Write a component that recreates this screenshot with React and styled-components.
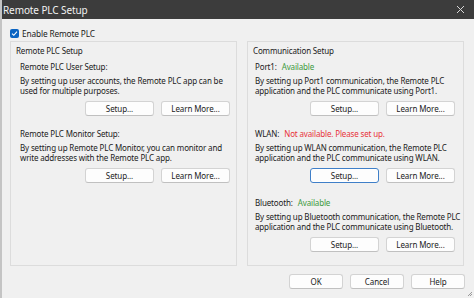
import React from 'react'
import styled, { createGlobalStyle } from 'styled-components'

const GlobalStyle = createGlobalStyle`
  html, body {
    margin: 0;
    padding: 0;
    background: #f0f0f0;
  }
  body {
    font-family: "Segoe UI", "Noto Sans", "Open Sans", sans-serif;
  }
`

const Window = styled.div`
  position: relative;
  width: 474px;
  height: 298px;
  display: flex;
  flex-direction: column;
  background: #f0f0f0;
  color: #1b1b1b;
  font-size: 8px;
  letter-spacing: -0.15px;
  white-space: nowrap;
  box-sizing: border-box;
  border-left: 2px solid #c4c4c4;
  overflow: hidden;
`

const TitleBar = styled.div`
  height: 19px;
  flex: none;
  display: flex;
  align-items: center;
  justify-content: space-between;
  background: #3c3c3c;
  color: #f2f2f2;
  font-size: 10px;
  letter-spacing: -0.1px;
  padding: 0 9px 0 3px;
  margin-left: -2px;
`

const Body = styled.div`
  flex: 1;
  display: flex;
  flex-direction: column;
  padding: 9px 9px 0 8px;
`

const CheckRow = styled.label`
  display: flex;
  align-items: center;
  height: 10px;
  gap: 3px;
  font-size: 8.3px;
`

const CheckBox = styled.span`
  width: 9px;
  height: 9px;
  border-radius: 2px;
  background: #0a64c2;
  display: flex;
  align-items: center;
  justify-content: center;
`

const Groups = styled.div`
  display: grid;
  grid-template-columns: 227px 217px;
  column-gap: 10px;
  margin-top: 3px;
  height: 225px;
`

const GroupBox = styled.div`
  border: 1px solid #dcdcdc;
  display: flex;
  flex-direction: column;
  padding: 4px 0 0 0;
`

const GroupLabel = styled.div`
  line-height: 10px;
  padding-left: 5px;
`

const Section = styled.div`
  display: flex;
  flex-direction: column;
  padding: 0 ${p => p.$right}px 0 ${p => p.$left}px;
  margin-top: ${p => p.$top}px;
`

const Heading = styled.div`
  line-height: 10px;
  display: flex;
`

const Status = styled.span`
  margin-left: 5px;
  color: ${p => (p.$ok ? '#3c9a3c' : '#e8323a')};
`

const Desc = styled.div`
  margin-top: 4px;
  line-height: 10px;
`

const ButtonRow = styled.div`
  display: flex;
  justify-content: flex-end;
  gap: 7px;
  margin-top: 5px;
`

const Button = styled.button`
  width: ${p => p.$w}px;
  height: 15px;
  box-sizing: border-box;
  padding: 0;
  font: inherit;
  font-size: 8px;
  letter-spacing: -0.1px;
  color: #1b1b1b;
  background: #fdfdfd;
  border: 1px solid ${p => (p.$focus ? '#3f7fc8' : '#d3d3d3')};
  border-bottom-color: ${p => (p.$focus ? '#3f7fc8' : '#c0c0c0')};
  border-radius: 3px;
  box-shadow: ${p => (p.$focus ? 'inset 0 0 0 1px #ffffff' : 'none')};
`

const Footer = styled.div`
  display: flex;
  justify-content: flex-end;
  gap: 7px;
  margin-top: 8px;
`

const Grip = styled.svg`
  position: absolute;
  right: 1px;
  bottom: 1px;
`

function Buttons({ focus }) {
  return (
    <ButtonRow>
      <Button $w={69} $focus={focus}>Setup...</Button>
      <Button $w={69}>Learn More...</Button>
    </ButtonRow>
  )
}

export default function App() {
  return (
    <Window>
      <GlobalStyle />
      <TitleBar>
        <span>Remote PLC Setup</span>
        <svg width="9" height="9" viewBox="0 0 9 9">
          <path d="M1 1 L8 8 M8 1 L1 8" stroke="#d8d8d8" strokeWidth="1" />
        </svg>
      </TitleBar>
      <Body>
        <CheckRow>
          <CheckBox>
            <svg width="7" height="7" viewBox="0 0 7 7">
              <path d="M1 3.6 L2.8 5.3 L6 1.6" stroke="#fff" strokeWidth="1.1" fill="none" />
            </svg>
          </CheckBox>
          Enable Remote PLC
        </CheckRow>
        <Groups>
          <GroupBox>
            <GroupLabel>Remote PLC Setup</GroupLabel>
            <Section $left={9} $right={6} $top={6}>
              <Heading>Remote PLC User Setup:</Heading>
              <Desc>
                By setting up user accounts, the Remote PLC app can be
                <br />
                used for multiple purposes.
              </Desc>
              <Buttons />
            </Section>
            <Section $left={9} $right={6} $top={13}>
              <Heading>Remote PLC Monitor Setup:</Heading>
              <Desc>
                By setting up Remote PLC Monitor, you can monitor and
                <br />
                write addresses with the Remote PLC app.
              </Desc>
              <Buttons />
            </Section>
          </GroupBox>
          <GroupBox>
            <GroupLabel>Communication Setup</GroupLabel>
            <Section $left={7} $right={8} $top={6}>
              <Heading>
                Port1:<Status $ok>Available</Status>
              </Heading>
              <Desc>
                By setting up Port1 communication, the Remote PLC
                <br />
                application and the PLC communicate using Port1.
              </Desc>
              <Buttons />
            </Section>
            <Section $left={7} $right={8} $top={13}>
              <Heading>
                WLAN:<Status>Not available. Please set up.</Status>
              </Heading>
              <Desc>
                By setting up WLAN communication, the Remote PLC
                <br />
                application and the PLC communicate using WLAN.
              </Desc>
              <Buttons focus />
            </Section>
            <Section $left={7} $right={8} $top={15}>
              <Heading>
                Bluetooth:<Status $ok>Available</Status>
              </Heading>
              <Desc>
                By setting up Bluetooth communication, the Remote PLC
                <br />
                application and the PLC communicate using Bluetooth.
              </Desc>
              <Buttons />
            </Section>
          </GroupBox>
        </Groups>
        <Footer>
          <Button $w={54}>OK</Button>
          <Button $w={54}>Cancel</Button>
          <Button $w={54}>Help</Button>
        </Footer>
      </Body>
      <Grip width="6" height="6" viewBox="0 0 6 6">
        <path d="M5 1 L1 5 M5 3 L3 5" stroke="#9a9a9a" strokeWidth="1" />
      </Grip>
    </Window>
  )
}
